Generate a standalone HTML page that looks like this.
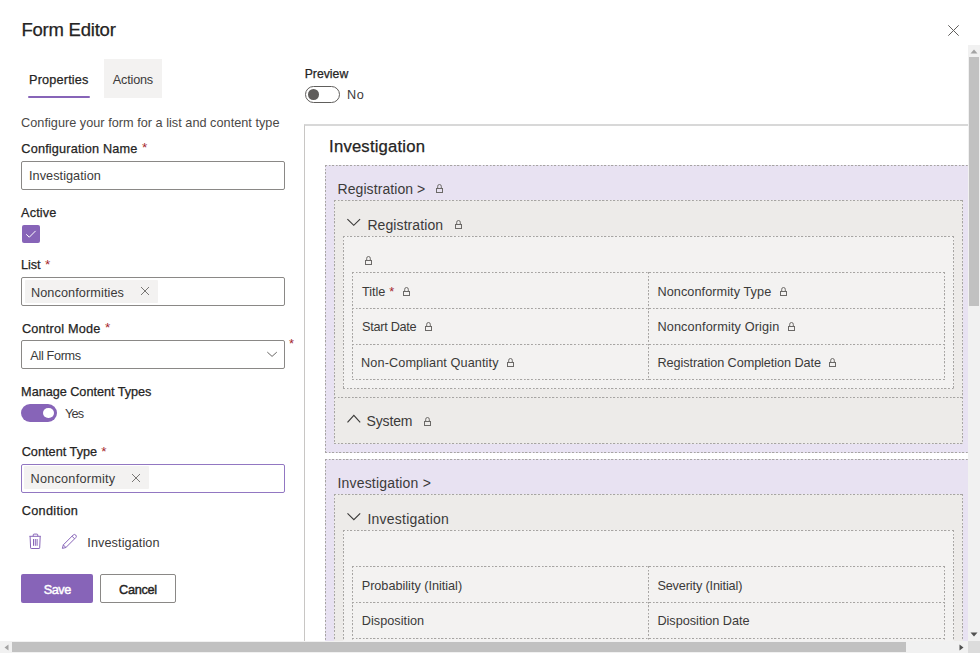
<!DOCTYPE html>
<html><head><meta charset="utf-8"><style>
html,body{margin:0;padding:0;width:980px;height:653px;overflow:hidden;background:#fff;}
body{position:relative;font-family:"Liberation Sans",sans-serif;}
.t{position:absolute;white-space:pre;line-height:1;}
.b{position:absolute;}
</style></head><body>
<div class="t" style="left:21.40px;top:20.71px;font-size:18.5px;color:#252423;letter-spacing:-0.220px;-webkit-text-stroke:0.25px currentColor;">Form Editor</div>
<div class="t" style="left:29.00px;top:73.60px;font-size:12.7px;color:#252423;letter-spacing:0.177px;-webkit-text-stroke:0.25px currentColor;">Properties</div>
<div class="b" style="left:28px;top:96px;width:62px;height:2px;background:#8764b8;border-radius:1px"></div>
<div class="b" style="left:104px;top:59px;width:58px;height:39px;background:#f3f2f1"></div>
<div class="t" style="left:112.80px;top:73.60px;font-size:12.7px;color:#3b3a39;letter-spacing:-0.200px;">Actions</div>
<div class="t" style="left:21.10px;top:116.90px;font-size:12.7px;color:#4a4846;letter-spacing:0.021px;">Configure your form for a list and content type</div>
<div class="t" style="left:21.30px;top:143.00px;font-size:12.7px;color:#252423;letter-spacing:0.189px;-webkit-text-stroke:0.25px currentColor;">Configuration Name</div>
<div class="t" style="left:142.00px;top:141.49px;font-size:13.5px;color:#a4262c;letter-spacing:0.600px;">*</div>
<div class="b" style="left:21px;top:161px;width:264px;height:29px;border:1px solid #8a8886;border-radius:2px;box-sizing:border-box;background:#fff"></div>
<div class="t" style="left:29.00px;top:170.21px;font-size:12.7px;color:#3b3a39;letter-spacing:0.048px;">Investigation</div>
<div class="t" style="left:21.10px;top:206.80px;font-size:12.7px;color:#252423;letter-spacing:0.120px;-webkit-text-stroke:0.25px currentColor;">Active</div>
<div class="b" style="left:21.5px;top:224.5px;width:18px;height:18px;background:#8764b8;border-radius:2px"></div>
<svg class="b" style="left:21.5px;top:224.5px" width="18" height="18" viewBox="0 0 18 18"><path d="M4.2 9.3 L7.3 12.2 L13.6 5.9" fill="none" stroke="#fff" stroke-width="1"/></svg>
<div class="t" style="left:20.90px;top:259.00px;font-size:12.7px;color:#252423;letter-spacing:0.000px;-webkit-text-stroke:0.25px currentColor;">List</div>
<div class="t" style="left:45.00px;top:257.69px;font-size:13.5px;color:#a4262c;letter-spacing:0.600px;">*</div>
<div class="b" style="left:21px;top:277px;width:264px;height:29px;border:1px solid #8a8886;border-radius:2px;box-sizing:border-box;background:#fff"></div>
<div class="b" style="left:24.5px;top:280px;width:133.5px;height:22.8px;background:#f3f2f1;border-radius:1px"></div>
<div class="t" style="left:30.90px;top:286.50px;font-size:12.7px;color:#3b3a39;letter-spacing:0.099px;">Nonconformities</div>
<svg class="b" style="left:140px;top:286px" width="10" height="10" viewBox="0 0 10 10"><path d="M1 1 L9 9 M9 1 L1 9" stroke="#6b6967" stroke-width="0.9"/></svg>
<div class="t" style="left:21.90px;top:323.00px;font-size:12.7px;color:#252423;letter-spacing:0.216px;-webkit-text-stroke:0.25px currentColor;">Control Mode</div>
<div class="t" style="left:105.00px;top:321.19px;font-size:13.5px;color:#a4262c;letter-spacing:0.600px;">*</div>
<div class="b" style="left:21px;top:340px;width:264px;height:29px;border:1px solid #8a8886;border-radius:2px;box-sizing:border-box;background:#fff"></div>
<div class="t" style="left:30.30px;top:349.80px;font-size:12.7px;color:#3b3a39;letter-spacing:-0.350px;">All Forms</div>
<svg class="b" style="left:266px;top:350px" width="12" height="9" viewBox="0 0 12 9"><path d="M1.3 2.1 L6.05 6.4 L10.8 2.1" fill="none" stroke="#605e5c" stroke-width="0.95"/></svg>
<div class="t" style="left:289.10px;top:338.00px;font-size:12.8px;color:#a4262c;letter-spacing:0.600px;">*</div>
<div class="t" style="left:21.10px;top:385.80px;font-size:12.7px;color:#252423;letter-spacing:-0.033px;-webkit-text-stroke:0.25px currentColor;">Manage Content Types</div>
<div class="b" style="left:21.1px;top:403.9px;width:36.2px;height:17.9px;background:#8764b8;border-radius:9px"></div>
<div class="b" style="left:42.8px;top:407.6px;width:11.2px;height:10.8px;background:#fff;border-radius:50%"></div>
<div class="t" style="left:65.00px;top:407.60px;font-size:12.7px;color:#3b3a39;letter-spacing:-0.800px;">Yes</div>
<div class="t" style="left:21.70px;top:445.80px;font-size:12.7px;color:#252423;letter-spacing:0.020px;-webkit-text-stroke:0.25px currentColor;">Content Type</div>
<div class="t" style="left:101.30px;top:444.69px;font-size:13.5px;color:#a4262c;letter-spacing:0.600px;">*</div>
<div class="b" style="left:21px;top:464px;width:264px;height:29px;border:1px solid #9277c2;border-radius:2px;box-sizing:border-box;background:#fff"></div>
<div class="b" style="left:24.2px;top:466.4px;width:124.8px;height:22.6px;background:#f3f2f1;border-radius:1px"></div>
<div class="t" style="left:30.50px;top:473.00px;font-size:12.7px;color:#3b3a39;letter-spacing:0.234px;">Nonconformity</div>
<svg class="b" style="left:131px;top:473px" width="10" height="10" viewBox="0 0 10 10"><path d="M1 1 L9 9 M9 1 L1 9" stroke="#6b6967" stroke-width="0.9"/></svg>
<div class="t" style="left:21.70px;top:505.00px;font-size:12.7px;color:#252423;letter-spacing:0.328px;-webkit-text-stroke:0.25px currentColor;">Condition</div>
<svg class="b" style="left:28px;top:532px" width="14" height="18" viewBox="0 0 14 18"><g fill="none" stroke="#8764b8" stroke-width="1"><path d="M1.4 4.3 H12.8"/><path d="M5.2 4.3 V3 Q5.2 2.1 6.1 2.1 H8.9 Q9.8 2.1 9.8 3 V4.3"/><path d="M2.1 4.3 L2.6 15.9 Q2.6 16.5 3.2 16.5 H11.1 Q11.7 16.5 11.7 15.9 L12.2 4.3"/><path d="M5.5 7 V13.8 M7.3 7 V13.8 M9.1 7 V13.8"/></g></svg>
<svg class="b" style="left:60px;top:532px" width="18" height="18" viewBox="0 0 18 18"><g fill="none" stroke="#8764b8" stroke-width="1"><path d="M2.4 16.4 L3.3 12.9 L13.2 3.0 A1.84 1.84 0 0 1 15.8 5.6 L5.9 15.5 Z"/><path d="M3.3 12.9 L5.9 15.5"/><path d="M12 4.2 L14.6 6.8"/></g></svg>
<div class="t" style="left:87.30px;top:537.00px;font-size:12.7px;color:#3b3a39;letter-spacing:0.084px;">Investigation</div>
<div class="b" style="left:21px;top:574px;width:72px;height:29px;background:#8764b8;border-radius:2px"></div>
<div class="t" style="left:43.70px;top:584.00px;font-size:12.7px;color:#fff;letter-spacing:-0.466px;-webkit-text-stroke:0.45px currentColor;">Save</div>
<div class="b" style="left:100px;top:574px;width:76px;height:29px;border:1px solid #8a8886;border-radius:2px;box-sizing:border-box;background:#fff"></div>
<div class="t" style="left:119.10px;top:584.00px;font-size:12.7px;color:#252423;letter-spacing:-0.280px;-webkit-text-stroke:0.4px currentColor;">Cancel</div>
<svg class="b" style="left:947px;top:24px" width="13" height="13" viewBox="0 0 13 13"><path d="M1.3 1.3 L11.7 11.7 M11.7 1.3 L1.3 11.7" stroke="#605e5c" stroke-width="1"/></svg>
<div class="t" style="left:304.70px;top:67.61px;font-size:12.2px;color:#252423;letter-spacing:0.032px;-webkit-text-stroke:0.25px currentColor;">Preview</div>
<div class="b" style="left:304.5px;top:85.7px;width:35.5px;height:17.5px;border:1px solid #605e5c;border-radius:9px;box-sizing:border-box;background:#fff"></div>
<div class="b" style="left:308.2px;top:89.1px;width:10.7px;height:10.6px;background:#605e5c;border-radius:50%"></div>
<div class="t" style="left:347.10px;top:89.00px;font-size:12.7px;color:#3b3a39;letter-spacing:0.600px;">No</div>
<div class="b" style="left:304px;top:124px;width:700px;height:600px;border-left:1px solid #c8c6c4;border-top:2px solid #d8d8d8;box-sizing:border-box;background:#fff"></div>
<div class="t" style="left:329.10px;top:139.00px;font-size:16.7px;color:#252423;letter-spacing:0.183px;-webkit-text-stroke:0.25px currentColor;">Investigation</div>
<div class="b" style="left:325px;top:165px;width:700px;height:288px;background:#e8e2f2"></div>
<div class="b" style="left:325px;top:165px;width:700px;height:1px;background:repeating-linear-gradient(to right,#a6a4a2 0 1.4px,transparent 2.4px 3.58px)"></div>
<div class="b" style="left:325px;top:452px;width:700px;height:1px;background:repeating-linear-gradient(to right,#a6a4a2 0 1.4px,transparent 2.4px 3.58px)"></div>
<div class="b" style="left:325px;top:165px;width:1px;height:288px;background:repeating-linear-gradient(to bottom,#a6a4a2 0 1.4px,transparent 2.4px 3.58px)"></div>
<div class="b" style="left:1024px;top:165px;width:1px;height:288px;background:repeating-linear-gradient(to bottom,#a6a4a2 0 1.4px,transparent 2.4px 3.58px)"></div>
<div class="t" style="left:337.50px;top:181.91px;font-size:14px;color:#3b3a39;letter-spacing:0.076px;">Registration &gt;</div>
<svg class="b" style="left:436px;top:184px" width="7" height="9" viewBox="0 0 7 9"><g fill="none" stroke="#6b6967" stroke-width="1"><rect x="0.5" y="4.5" width="6" height="4"/><path d="M1.7 4.5 V2.3 Q1.7 0.5 3.5 0.5 Q5.3 0.5 5.3 2.3 V4.5"/></g></svg>
<div class="b" style="left:334px;top:200px;width:629px;height:198px;background:#edebe9"></div>
<div class="b" style="left:334px;top:200px;width:629px;height:1px;background:repeating-linear-gradient(to right,#a6a4a2 0 1.4px,transparent 2.4px 3.58px)"></div>
<div class="b" style="left:334px;top:397px;width:629px;height:1px;background:repeating-linear-gradient(to right,#a6a4a2 0 1.4px,transparent 2.4px 3.58px)"></div>
<div class="b" style="left:334px;top:200px;width:1px;height:198px;background:repeating-linear-gradient(to bottom,#a6a4a2 0 1.4px,transparent 2.4px 3.58px)"></div>
<div class="b" style="left:962px;top:200px;width:1px;height:198px;background:repeating-linear-gradient(to bottom,#a6a4a2 0 1.4px,transparent 2.4px 3.58px)"></div>
<svg class="b" style="left:346px;top:218px" width="16" height="10" viewBox="0 0 16 10"><path d="M1.4 1.1 L7.75 7.3 L14.1 1.1" fill="none" stroke="#3b3a39" stroke-width="1.15"/></svg>
<div class="t" style="left:367.40px;top:217.61px;font-size:14px;color:#3b3a39;letter-spacing:0.091px;">Registration</div>
<svg class="b" style="left:455px;top:220px" width="7" height="9" viewBox="0 0 7 9"><g fill="none" stroke="#6b6967" stroke-width="1"><rect x="0.5" y="4.5" width="6" height="4"/><path d="M1.7 4.5 V2.3 Q1.7 0.5 3.5 0.5 Q5.3 0.5 5.3 2.3 V4.5"/></g></svg>
<div class="b" style="left:343px;top:236px;width:611px;height:153px;background:#f3f2f1"></div>
<div class="b" style="left:343px;top:236px;width:611px;height:1px;background:repeating-linear-gradient(to right,#a6a4a2 0 1.4px,transparent 2.4px 3.58px)"></div>
<div class="b" style="left:343px;top:388px;width:611px;height:1px;background:repeating-linear-gradient(to right,#a6a4a2 0 1.4px,transparent 2.4px 3.58px)"></div>
<div class="b" style="left:343px;top:236px;width:1px;height:153px;background:repeating-linear-gradient(to bottom,#a6a4a2 0 1.4px,transparent 2.4px 3.58px)"></div>
<div class="b" style="left:953px;top:236px;width:1px;height:153px;background:repeating-linear-gradient(to bottom,#a6a4a2 0 1.4px,transparent 2.4px 3.58px)"></div>
<svg class="b" style="left:365px;top:256px" width="7" height="9" viewBox="0 0 7 9"><g fill="none" stroke="#6b6967" stroke-width="1"><rect x="0.5" y="4.5" width="6" height="4"/><path d="M1.7 4.5 V2.3 Q1.7 0.5 3.5 0.5 Q5.3 0.5 5.3 2.3 V4.5"/></g></svg>
<div class="b" style="left:352px;top:272px;width:593px;height:1px;background:repeating-linear-gradient(to right,#a6a4a2 0 1.4px,transparent 2.4px 3.58px)"></div>
<div class="b" style="left:352px;top:379px;width:593px;height:1px;background:repeating-linear-gradient(to right,#a6a4a2 0 1.4px,transparent 2.4px 3.58px)"></div>
<div class="b" style="left:352px;top:272px;width:1px;height:108px;background:repeating-linear-gradient(to bottom,#a6a4a2 0 1.4px,transparent 2.4px 3.58px)"></div>
<div class="b" style="left:944px;top:272px;width:1px;height:108px;background:repeating-linear-gradient(to bottom,#a6a4a2 0 1.4px,transparent 2.4px 3.58px)"></div>
<div class="b" style="left:352px;top:308px;width:593px;height:1px;background:repeating-linear-gradient(to right,#a6a4a2 0 1.4px,transparent 2.4px 3.58px)"></div>
<div class="b" style="left:352px;top:344px;width:593px;height:1px;background:repeating-linear-gradient(to right,#a6a4a2 0 1.4px,transparent 2.4px 3.58px)"></div>
<div class="b" style="left:648px;top:272px;width:1px;height:108px;background:repeating-linear-gradient(to bottom,#a6a4a2 0 1.4px,transparent 2.4px 3.58px)"></div>
<div class="t" style="left:362.10px;top:285.80px;font-size:12.7px;color:#3b3a39;letter-spacing:-0.100px;">Title</div>
<div class="t" style="left:389.20px;top:285.90px;font-size:12.8px;color:#a4262c;letter-spacing:0.600px;">*</div>
<svg class="b" style="left:403px;top:287px" width="7" height="9" viewBox="0 0 7 9"><g fill="none" stroke="#6b6967" stroke-width="1"><rect x="0.5" y="4.5" width="6" height="4"/><path d="M1.7 4.5 V2.3 Q1.7 0.5 3.5 0.5 Q5.3 0.5 5.3 2.3 V4.5"/></g></svg>
<div class="t" style="left:362.10px;top:321.30px;font-size:12.7px;color:#3b3a39;letter-spacing:-0.288px;">Start Date</div>
<svg class="b" style="left:425px;top:322px" width="7" height="9" viewBox="0 0 7 9"><g fill="none" stroke="#6b6967" stroke-width="1"><rect x="0.5" y="4.5" width="6" height="4"/><path d="M1.7 4.5 V2.3 Q1.7 0.5 3.5 0.5 Q5.3 0.5 5.3 2.3 V4.5"/></g></svg>
<div class="t" style="left:361.10px;top:356.90px;font-size:12.7px;color:#3b3a39;letter-spacing:0.096px;">Non-Compliant Quantity</div>
<svg class="b" style="left:507px;top:358px" width="7" height="9" viewBox="0 0 7 9"><g fill="none" stroke="#6b6967" stroke-width="1"><rect x="0.5" y="4.5" width="6" height="4"/><path d="M1.7 4.5 V2.3 Q1.7 0.5 3.5 0.5 Q5.3 0.5 5.3 2.3 V4.5"/></g></svg>
<div class="t" style="left:657.40px;top:285.80px;font-size:12.7px;color:#3b3a39;letter-spacing:0.072px;">Nonconformity Type</div>
<svg class="b" style="left:780px;top:287px" width="7" height="9" viewBox="0 0 7 9"><g fill="none" stroke="#6b6967" stroke-width="1"><rect x="0.5" y="4.5" width="6" height="4"/><path d="M1.7 4.5 V2.3 Q1.7 0.5 3.5 0.5 Q5.3 0.5 5.3 2.3 V4.5"/></g></svg>
<div class="t" style="left:657.40px;top:321.30px;font-size:12.7px;color:#3b3a39;letter-spacing:0.145px;">Nonconformity Origin</div>
<svg class="b" style="left:788px;top:322px" width="7" height="9" viewBox="0 0 7 9"><g fill="none" stroke="#6b6967" stroke-width="1"><rect x="0.5" y="4.5" width="6" height="4"/><path d="M1.7 4.5 V2.3 Q1.7 0.5 3.5 0.5 Q5.3 0.5 5.3 2.3 V4.5"/></g></svg>
<div class="t" style="left:657.40px;top:356.90px;font-size:12.7px;color:#3b3a39;letter-spacing:-0.079px;">Registration Completion Date</div>
<svg class="b" style="left:829px;top:358px" width="7" height="9" viewBox="0 0 7 9"><g fill="none" stroke="#6b6967" stroke-width="1"><rect x="0.5" y="4.5" width="6" height="4"/><path d="M1.7 4.5 V2.3 Q1.7 0.5 3.5 0.5 Q5.3 0.5 5.3 2.3 V4.5"/></g></svg>
<div class="b" style="left:334px;top:397px;width:629px;height:47px;background:#edebe9"></div>
<div class="b" style="left:334px;top:397px;width:629px;height:1px;background:repeating-linear-gradient(to right,#a6a4a2 0 1.4px,transparent 2.4px 3.58px)"></div>
<div class="b" style="left:334px;top:443px;width:629px;height:1px;background:repeating-linear-gradient(to right,#a6a4a2 0 1.4px,transparent 2.4px 3.58px)"></div>
<div class="b" style="left:334px;top:397px;width:1px;height:47px;background:repeating-linear-gradient(to bottom,#a6a4a2 0 1.4px,transparent 2.4px 3.58px)"></div>
<div class="b" style="left:962px;top:397px;width:1px;height:47px;background:repeating-linear-gradient(to bottom,#a6a4a2 0 1.4px,transparent 2.4px 3.58px)"></div>
<svg class="b" style="left:346px;top:414px" width="16" height="10" viewBox="0 0 16 10"><path d="M1.5 8.3 L7.85 1.4 L14.2 8.3" fill="none" stroke="#3b3a39" stroke-width="1.15"/></svg>
<div class="t" style="left:366.60px;top:414.21px;font-size:14px;color:#3b3a39;letter-spacing:-0.160px;">System</div>
<svg class="b" style="left:424px;top:417px" width="7" height="9" viewBox="0 0 7 9"><g fill="none" stroke="#6b6967" stroke-width="1"><rect x="0.5" y="4.5" width="6" height="4"/><path d="M1.7 4.5 V2.3 Q1.7 0.5 3.5 0.5 Q5.3 0.5 5.3 2.3 V4.5"/></g></svg>
<div class="b" style="left:325px;top:459px;width:700px;height:300px;background:#e8e2f2"></div>
<div class="b" style="left:325px;top:459px;width:700px;height:1px;background:repeating-linear-gradient(to right,#a6a4a2 0 1.4px,transparent 2.4px 3.58px)"></div>
<div class="b" style="left:325px;top:758px;width:700px;height:1px;background:repeating-linear-gradient(to right,#a6a4a2 0 1.4px,transparent 2.4px 3.58px)"></div>
<div class="b" style="left:325px;top:459px;width:1px;height:300px;background:repeating-linear-gradient(to bottom,#a6a4a2 0 1.4px,transparent 2.4px 3.58px)"></div>
<div class="b" style="left:1024px;top:459px;width:1px;height:300px;background:repeating-linear-gradient(to bottom,#a6a4a2 0 1.4px,transparent 2.4px 3.58px)"></div>
<div class="t" style="left:337.40px;top:475.71px;font-size:14px;color:#3b3a39;letter-spacing:0.199px;">Investigation &gt;</div>
<div class="b" style="left:334px;top:494px;width:629px;height:300px;background:#edebe9"></div>
<div class="b" style="left:334px;top:494px;width:629px;height:1px;background:repeating-linear-gradient(to right,#a6a4a2 0 1.4px,transparent 2.4px 3.58px)"></div>
<div class="b" style="left:334px;top:793px;width:629px;height:1px;background:repeating-linear-gradient(to right,#a6a4a2 0 1.4px,transparent 2.4px 3.58px)"></div>
<div class="b" style="left:334px;top:494px;width:1px;height:300px;background:repeating-linear-gradient(to bottom,#a6a4a2 0 1.4px,transparent 2.4px 3.58px)"></div>
<div class="b" style="left:962px;top:494px;width:1px;height:300px;background:repeating-linear-gradient(to bottom,#a6a4a2 0 1.4px,transparent 2.4px 3.58px)"></div>
<svg class="b" style="left:346px;top:512px" width="16" height="10" viewBox="0 0 16 10"><path d="M1.5 1.4 L7.85 7.6 L14.2 1.4" fill="none" stroke="#3b3a39" stroke-width="1.15"/></svg>
<div class="t" style="left:367.40px;top:511.51px;font-size:14px;color:#3b3a39;letter-spacing:0.234px;">Investigation</div>
<div class="b" style="left:343px;top:530px;width:611px;height:300px;background:#f3f2f1"></div>
<div class="b" style="left:343px;top:530px;width:611px;height:1px;background:repeating-linear-gradient(to right,#a6a4a2 0 1.4px,transparent 2.4px 3.58px)"></div>
<div class="b" style="left:343px;top:829px;width:611px;height:1px;background:repeating-linear-gradient(to right,#a6a4a2 0 1.4px,transparent 2.4px 3.58px)"></div>
<div class="b" style="left:343px;top:530px;width:1px;height:300px;background:repeating-linear-gradient(to bottom,#a6a4a2 0 1.4px,transparent 2.4px 3.58px)"></div>
<div class="b" style="left:953px;top:530px;width:1px;height:300px;background:repeating-linear-gradient(to bottom,#a6a4a2 0 1.4px,transparent 2.4px 3.58px)"></div>
<div class="b" style="left:352px;top:566px;width:593px;height:1px;background:repeating-linear-gradient(to right,#a6a4a2 0 1.4px,transparent 2.4px 3.58px)"></div>
<div class="b" style="left:352px;top:765px;width:593px;height:1px;background:repeating-linear-gradient(to right,#a6a4a2 0 1.4px,transparent 2.4px 3.58px)"></div>
<div class="b" style="left:352px;top:566px;width:1px;height:200px;background:repeating-linear-gradient(to bottom,#a6a4a2 0 1.4px,transparent 2.4px 3.58px)"></div>
<div class="b" style="left:944px;top:566px;width:1px;height:200px;background:repeating-linear-gradient(to bottom,#a6a4a2 0 1.4px,transparent 2.4px 3.58px)"></div>
<div class="b" style="left:352px;top:602px;width:593px;height:1px;background:repeating-linear-gradient(to right,#a6a4a2 0 1.4px,transparent 2.4px 3.58px)"></div>
<div class="b" style="left:352px;top:638px;width:593px;height:1px;background:repeating-linear-gradient(to right,#a6a4a2 0 1.4px,transparent 2.4px 3.58px)"></div>
<div class="b" style="left:648px;top:566px;width:1px;height:200px;background:repeating-linear-gradient(to bottom,#a6a4a2 0 1.4px,transparent 2.4px 3.58px)"></div>
<div class="t" style="left:361.70px;top:579.80px;font-size:12.7px;color:#3b3a39;letter-spacing:-0.020px;">Probability (Initial)</div>
<div class="t" style="left:657.40px;top:579.80px;font-size:12.7px;color:#3b3a39;letter-spacing:-0.143px;">Severity (Initial)</div>
<div class="t" style="left:361.70px;top:615.10px;font-size:12.7px;color:#3b3a39;letter-spacing:0.040px;">Disposition</div>
<div class="t" style="left:657.40px;top:615.10px;font-size:12.7px;color:#3b3a39;letter-spacing:-0.012px;">Disposition Date</div>
<div class="b" style="left:968px;top:45px;width:12px;height:596px;background:#f1f1f1"></div>
<div class="b" style="left:969px;top:57px;width:10px;height:249px;background:#c1c1c1"></div>
<svg class="b" style="left:970px;top:49px" width="8" height="5" viewBox="0 0 8 5"><path d="M0.5 4.5 L4 0.5 L7.5 4.5 Z" fill="#a3a3a3"/></svg>
<svg class="b" style="left:970px;top:632px" width="8" height="5" viewBox="0 0 8 5"><path d="M0.5 0.5 L4 4.5 L7.5 0.5 Z" fill="#505050"/></svg>
<div class="b" style="left:0px;top:641px;width:968px;height:12px;background:#f1f1f1"></div>
<div class="b" style="left:12px;top:642px;width:894px;height:10px;background:#c1c1c1"></div>
<div class="b" style="left:968px;top:641px;width:12px;height:12px;background:#dcdcdc"></div>
<svg class="b" style="left:4px;top:644px" width="5" height="7" viewBox="0 0 5 7"><path d="M4.5 0.5 L0.5 3.5 L4.5 6.5 Z" fill="#a3a3a3"/></svg>
<svg class="b" style="left:959px;top:644px" width="5" height="7" viewBox="0 0 5 7"><path d="M0.5 0.5 L4.5 3.5 L0.5 6.5 Z" fill="#505050"/></svg>
</body></html>
